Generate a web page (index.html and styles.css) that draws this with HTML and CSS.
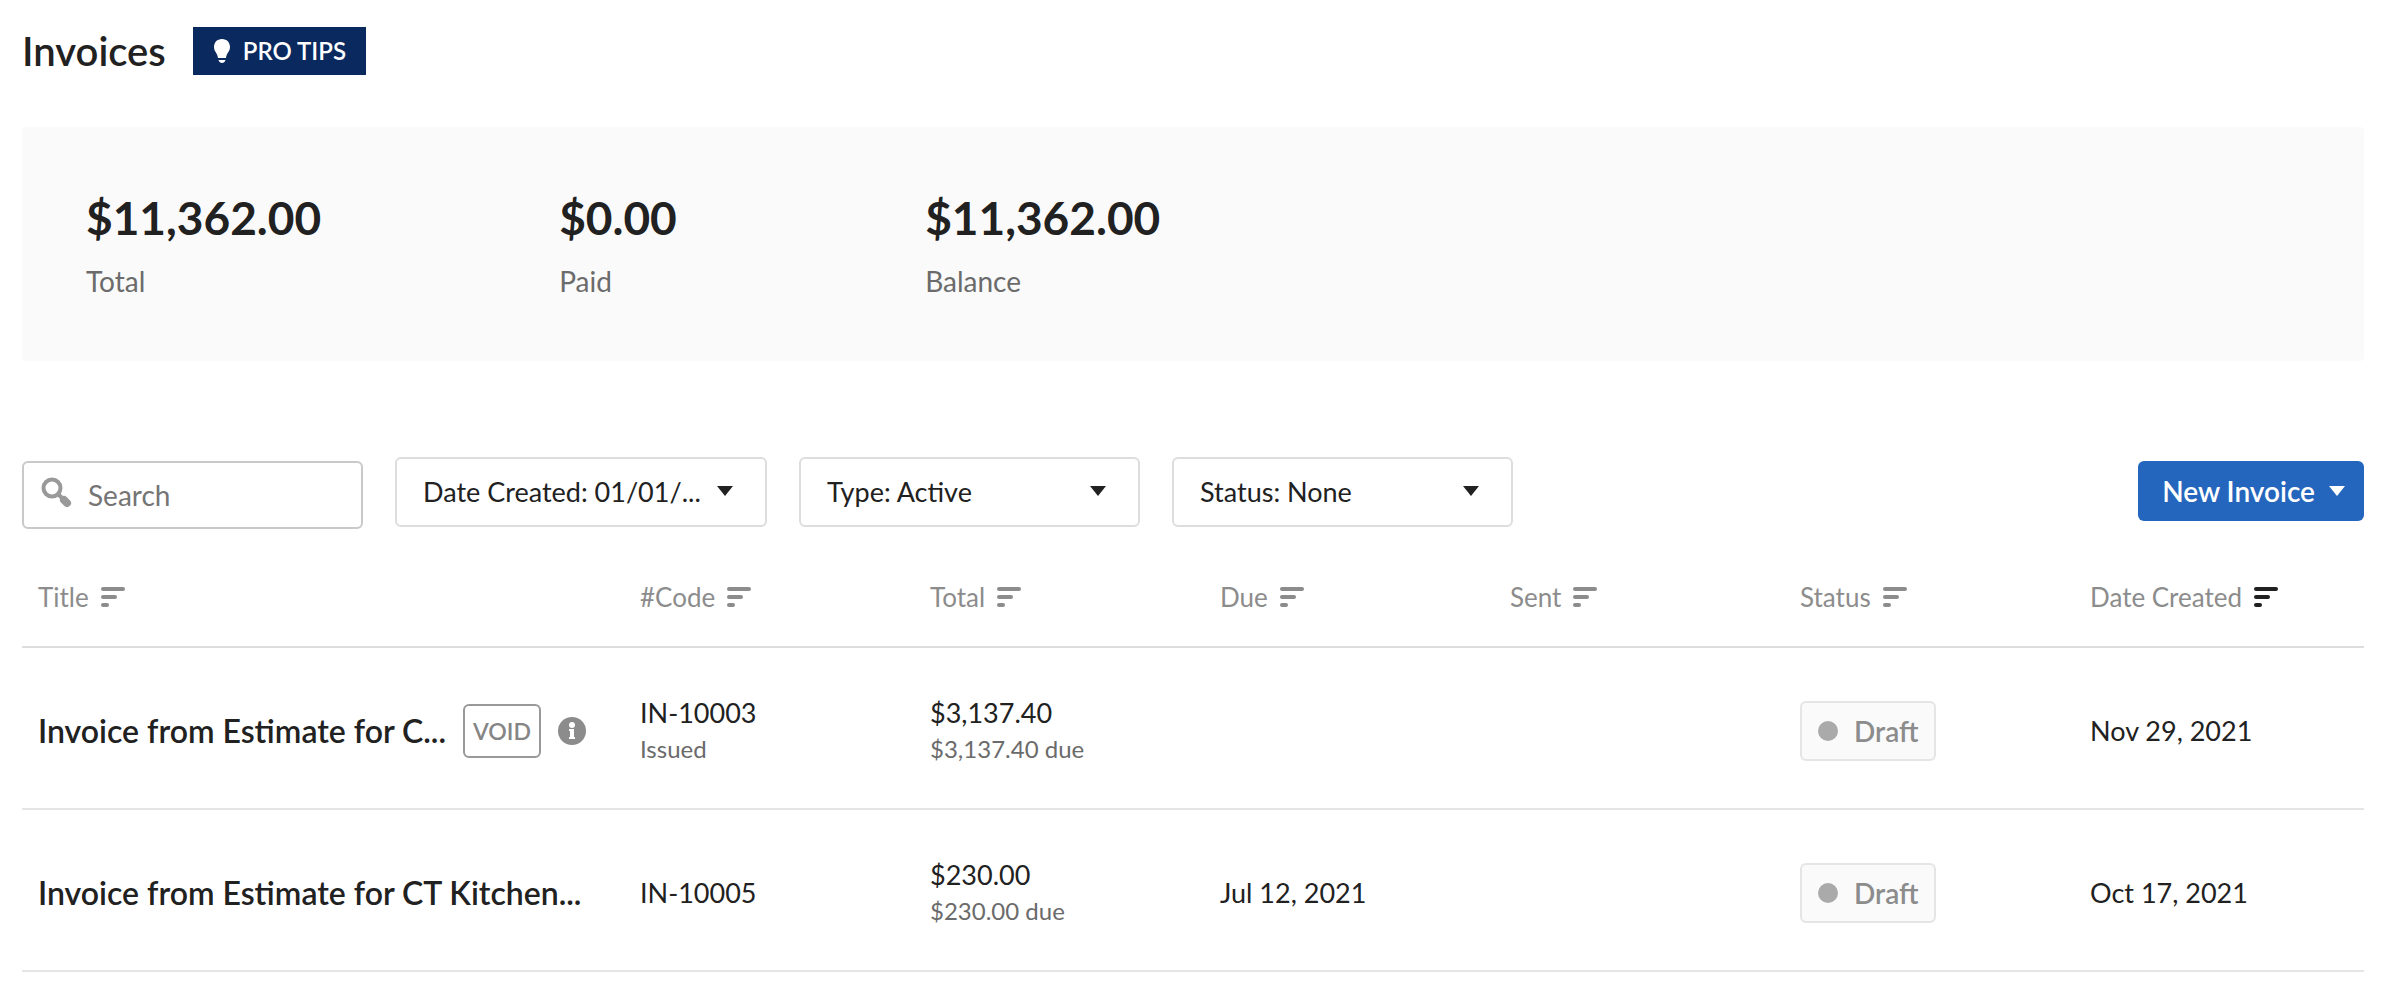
FILE: index.html
```html
<!DOCTYPE html>
<html lang="en">
<head>
  <meta charset="UTF-8">
  <meta name="viewport" content="width=device-width, initial-scale=1.0">
  <title>Invoices</title>
  <link rel="stylesheet" href="styles.css">
</head>
<body>

  <!-- Shared icons -->
  <svg class="sprite" aria-hidden="true">
    <symbol id="sort" viewBox="0 0 24 20">
      <rect x="0" y="0" width="24" height="4" rx="2"/>
      <rect x="0" y="8" width="16" height="4" rx="2"/>
      <rect x="0" y="16" width="8" height="4" rx="2"/>
    </symbol>
    <symbol id="caret" viewBox="0 0 16 10">
      <path d="M0 0h16L8 10z"/>
    </symbol>
  </svg>

  <!-- Page Header -->
  <header class="page-header">
    <h1>Invoices</h1>
    <button class="tips-btn" type="button">
      <svg class="bulb" viewBox="0 0 18 24" aria-hidden="true">
        <path d="M9 0C4 0 1 3.600 1 8c0 4.500 3.500 6 4 11h8c.5-5 4-6.500 4-11 0-4.400-3-8-8-8zM5.500 21h7c-.5 2-2 3-3.500 3s-3-1-3.500-3z"/>
      </svg>
      PRO TIPS
    </button>
  </header>

  <!-- Totals -->
  <section class="summary">
    <div class="stat">
      <strong>$11,362.00</strong>
      <span>Total</span>
    </div>
    <div class="stat">
      <strong>$0.00</strong>
      <span>Paid</span>
    </div>
    <div class="stat">
      <strong>$11,362.00</strong>
      <span>Balance</span>
    </div>
  </section>

  <!-- Search and Filters -->
  <div class="toolbar">
    <div class="search">
      <svg class="search-icon" viewBox="0 0 32 32" aria-hidden="true">
        <circle cx="12" cy="11" r="8.500"/>
        <path d="M18 17l5 5"/>
        <path class="handle" d="M24 23l3 3"/>
      </svg>
      <input type="text" placeholder="Search" aria-label="Search">
    </div>
    <div class="filter wide">
      <select aria-label="Date Created">
        <option>Date Created: 01/01/...</option>
      </select>
      <svg class="caret"><use href="#caret"/></svg>
    </div>
    <div class="filter">
      <select aria-label="Type">
        <option>Type: Active</option>
      </select>
      <svg class="caret"><use href="#caret"/></svg>
    </div>
    <div class="filter">
      <select aria-label="Status">
        <option>Status: None</option>
      </select>
      <svg class="caret"><use href="#caret"/></svg>
    </div>
    <button class="new-btn" type="button">
      New Invoice
      <svg class="caret"><use href="#caret"/></svg>
    </button>
  </div>

  <!-- Invoice List -->
  <table class="invoices">
    <colgroup>
      <col>
      <col class="data-col">
      <col class="data-col">
      <col class="data-col">
      <col class="data-col">
      <col class="data-col">
      <col class="data-col">
    </colgroup>
    <thead>
      <tr>
        <th><button type="button">Title <svg class="sort"><use href="#sort"/></svg></button></th>
        <th><button type="button">#Code <svg class="sort"><use href="#sort"/></svg></button></th>
        <th><button type="button">Total <svg class="sort"><use href="#sort"/></svg></button></th>
        <th><button type="button">Due <svg class="sort"><use href="#sort"/></svg></button></th>
        <th><button type="button">Sent <svg class="sort"><use href="#sort"/></svg></button></th>
        <th><button type="button">Status <svg class="sort"><use href="#sort"/></svg></button></th>
        <th><button type="button">Date Created <svg class="sort active"><use href="#sort"/></svg></button></th>
      </tr>
    </thead>
    <tbody>
      <tr>
        <td>
          <div class="title-cell">
            <a href="#">Invoice from Estimate for C...</a>
            <span class="void">VOID</span>
            <svg class="info" viewBox="0 0 28 28" aria-label="More info">
              <circle cx="14" cy="14" r="14"/>
              <circle class="mark" cx="14" cy="8" r="3"/>
              <path class="mark" d="M11 12h5v8h1v2h-6v-2h1v-6h-1z"/>
            </svg>
          </div>
        </td>
        <td>IN-10003<small>Issued</small></td>
        <td>$3,137.40<small>$3,137.40 due</small></td>
        <td></td>
        <td></td>
        <td><span class="status">Draft</span></td>
        <td>Nov 29, 2021</td>
      </tr>
      <tr>
        <td>
          <div class="title-cell">
            <a href="#">Invoice from Estimate for CT Kitchen...</a>
          </div>
        </td>
        <td>IN-10005</td>
        <td>$230.00<small>$230.00 due</small></td>
        <td>Jul 12, 2021</td>
        <td></td>
        <td><span class="status">Draft</span></td>
        <td>Oct 17, 2021</td>
      </tr>
    </tbody>
  </table>

</body>
</html>
```
FILE: styles.css
```css
/* Global Styles */
* {
  box-sizing: border-box;
}

body {
  font-family: Lato, "Liberation Sans", sans-serif;
  font-size: 28px;
  line-height: 36px;
  margin: 0;
  padding: 27px 22px;
  background: #fff;
  color: #212121;
}

button, input, select {
  font: inherit;
  color: inherit;
}

button {
  cursor: pointer;
}

.sprite {
  display: none;
}

/* Page Header */
.page-header {
  display: flex;
  align-items: center;
  gap: 27px;
}

h1 {
  margin: 0;
  font-size: 40px;
  line-height: 48px;
  font-weight: 600;
}

.tips-btn {
  display: flex;
  align-items: center;
  gap: 12px;
  height: 48px;
  padding: 0 20px;
  border: none;
  background: #09295f;
  color: white;
  font-size: 24px;
  font-weight: 600;
}

.bulb {
  width: 18px;
  height: 24px;
  fill: white;
}

/* Totals */
.summary {
  display: flex;
  gap: 238px;
  margin-top: 52px;
  padding: 64px;
  height: 234px;
  border-radius: 4px;
  background: #fafafa;
}

.stat {
  min-width: 128px;
}

.stat strong {
  display: block;
  font-size: 46px;
  line-height: 54px;
  font-weight: 700;
}

.stat span {
  display: block;
  margin-top: 18px;
  color: #6b6b6b;
}

/* Search and Filters */
.toolbar {
  display: flex;
  align-items: flex-start;
  gap: 32px;
  margin-top: 96px;
}

.search {
  display: flex;
  align-items: center;
  gap: 16px;
  width: 341px;
  height: 68px;
  margin-top: 4px;
  padding: 0 16px;
  border: 2px solid #c9c9c9;
  border-radius: 6px;
}

.search-icon {
  flex: none;
  width: 32px;
  height: 32px;
  margin-bottom: 4px;
  fill: none;
  stroke: #999;
  stroke-width: 4;
}

.search-icon .handle {
  stroke-width: 8;
  stroke-linecap: round;
}

.search input {
  width: 100%;
  padding: 0;
  border: none;
  outline: none;
}

.search input::placeholder {
  color: #757575;
  opacity: 1;
}

.filter {
  position: relative;
  width: 341px;
}

.filter.wide {
  width: 372px;
}

.filter select {
  display: block;
  width: 100%;
  height: 70px;
  padding: 0 54px 0 26px;
  border: 2px solid #ddd;
  border-radius: 6px;
  background: white;
  font-size: 27px;
  appearance: none;
}

.caret {
  width: 16px;
  height: 10px;
  fill: currentColor;
}

.filter .caret {
  position: absolute;
  top: 29px;
  right: 34px;
  pointer-events: none;
}

.new-btn {
  display: flex;
  align-items: center;
  gap: 14px;
  height: 60px;
  margin-top: 4px;
  margin-left: auto;
  padding: 0 19px 0 24px;
  border: none;
  border-radius: 6px;
  background: #2466bd;
  color: white;
  font-weight: 600;
}

/* Invoice List */
.invoices {
  width: 100%;
  margin-top: 18px;
  border-collapse: collapse;
  table-layout: fixed;
}

.data-col {
  width: 290px;
}

th, td {
  padding: 0 16px;
  text-align: left;
}

th {
  height: 100px;
  border-bottom: 2px solid #ddd;
  font-weight: 400;
}

th button {
  display: flex;
  align-items: center;
  gap: 12px;
  padding: 0;
  border: none;
  background: none;
  color: #8c8c8c;
  font-size: 26px;
}

.sort {
  width: 24px;
  height: 20px;
  fill: #8c8c8c;
}

.sort.active {
  fill: #212121;
}

td {
  height: 162px;
  padding-top: 5px;
  border-bottom: 2px solid #e5e5e5;
  font-size: 27px;
}

td small {
  display: block;
  color: #6b6b6b;
  font-size: 24px;
}

.title-cell {
  display: flex;
  align-items: center;
  gap: 17px;
  white-space: nowrap;
}

.title-cell a {
  color: inherit;
  font-size: 32px;
  font-weight: 600;
  text-decoration: none;
}

.void {
  height: 54px;
  padding: 0 8px;
  border: 2px solid #999;
  border-radius: 6px;
  color: #858585;
  font-size: 23px;
  line-height: 50px;
  font-weight: 600;
}

.info {
  width: 28px;
  height: 28px;
  fill: #8c8c8c;
}

.info .mark {
  fill: white;
}

.status {
  display: inline-flex;
  align-items: center;
  gap: 16px;
  height: 60px;
  padding: 0 16px;
  border: 2px solid #e5e5e5;
  border-radius: 6px;
  background: #fafafa;
  color: #8c8c8c;
  font-size: 28px;
  font-weight: 600;
  vertical-align: middle;
}

.status::before {
  content: "";
  width: 20px;
  height: 20px;
  border-radius: 50%;
  background: #aaa;
}
```
